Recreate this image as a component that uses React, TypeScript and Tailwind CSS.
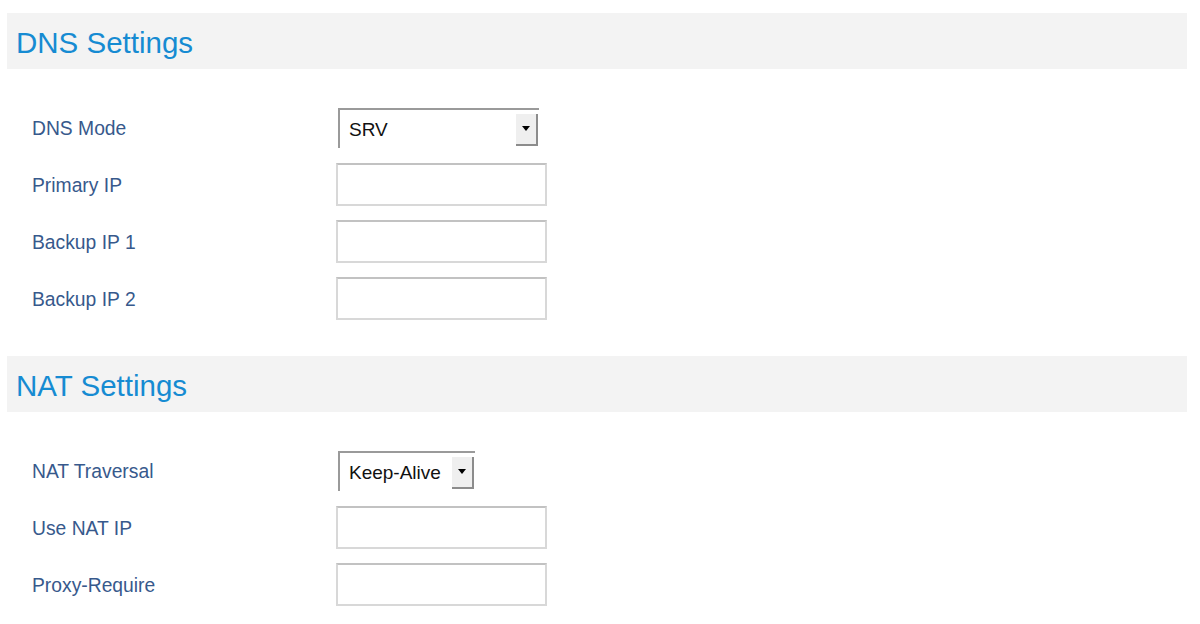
const font = { fontFamily: '"Liberation Sans", Arial, Helvetica, sans-serif' };

type Row = { label: string; kind: "select" | "input"; value?: string; width?: number };

const sections: { title: string; rows: Row[] }[] = [
  {
    title: "DNS Settings",
    rows: [
      { label: "DNS Mode", kind: "select", value: "SRV", width: 201 },
      { label: "Primary IP", kind: "input" },
      { label: "Backup IP 1", kind: "input" },
      { label: "Backup IP 2", kind: "input" },
    ],
  },
  {
    title: "NAT Settings",
    rows: [
      { label: "NAT Traversal", kind: "select", value: "Keep-Alive", width: 137 },
      { label: "Use NAT IP", kind: "input" },
      { label: "Proxy-Require", kind: "input" },
    ],
  },
];

function FakeSelect({ value, width }: { value: string; width: number }) {
  return (
    <div
      className="ml-[2px] h-[40px] flex items-center bg-white border-t-2 border-l-2 border-[#9a9a9a] pl-[9px] pr-[1px] text-[19px] text-[#111]"
      style={{ width }}
    >
      <span className="leading-none pt-[2px]">{value}</span>
      <div className="ml-auto w-[22px] h-[32px] mt-[2px] bg-[#efefef] border-r-2 border-b-2 border-[#8c8c8c] flex items-center justify-center">
        <div className="w-0 h-0 border-l-[4px] border-r-[4px] border-t-[5px] border-l-transparent border-r-transparent border-t-black" />
      </div>
    </div>
  );
}

function FakeInput() {
  return (
    <div className="w-[211px] h-[43px] bg-white border-2 border-[#d8d8d8] border-t-[#c2c2c2]" />
  );
}

export default function App() {
  return (
    <div className="w-[1200px] h-[624px] bg-white overflow-hidden pt-[13px]" style={font}>
      <div className="ml-[7px] w-[1180px] flex flex-col">
        {sections.map((s, i) => (
          <div key={s.title} className={i > 0 ? "mt-[29px]" : ""}>
            <div className="h-[56px] bg-[#f3f3f3] flex items-center pl-[9px] pt-[3px]">
              <h2 className="text-[29.5px] leading-none text-[#168bd2]">{s.title}</h2>
            </div>
            <div className="mt-[30px] flex flex-col">
              {s.rows.map((r) => (
                <div key={r.label} className="h-[57px] flex items-center">
                  <div className="w-[329px] pl-[25px] pt-[3px] text-[19.3px] text-[#37598c]">{r.label}</div>
                  {r.kind === "select" ? (
                    <FakeSelect value={r.value ?? ""} width={r.width ?? 200} />
                  ) : (
                    <FakeInput />
                  )}
                </div>
              ))}
            </div>
          </div>
        ))}
      </div>
    </div>
  );
}
